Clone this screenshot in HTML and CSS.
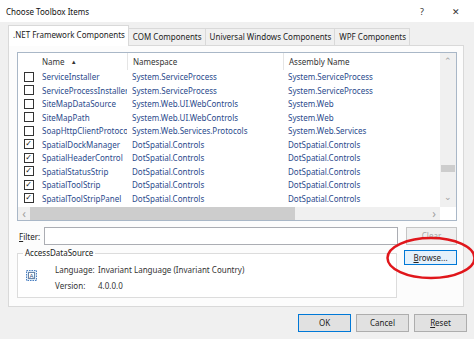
FILE: index.html
```html
<!DOCTYPE html>
<html>
    <head>
        <title>Choose Toolbox Items</title>
        <link rel="stylesheet" href="styles.css">
    </head>
    <body>
        <div class="window">
            <div class="titlebar">
                <span class="title">Choose Toolbox Items</span>
                <span class="tbtn">?</span>
                <span class="tbtn">&#x2715;</span>
            </div>
            <div class="client">
                <div class="tabs">
                    <div class="tab active">.NET Framework Components</div>
                    <div class="tab">COM Components</div>
                    <div class="tab">Universal Windows Components</div>
                    <div class="tab">WPF Components</div>
                </div>
                <div class="panel">
                    <div class="list">
                        <div class="listTop">
                            <div class="rows">
                                <div class="row header">
                                    <div class="c0"></div>
                                    <div class="c1">Name <span class="sort">&#9650;</span></div>
                                    <div class="c2 sep">Namespace</div>
                                    <div class="c3 sep">Assembly Name</div>
                                </div>
                                <div class="row"><div class="c0"><span class="cb"></span></div><div class="c1">ServiceInstaller</div><div class="c2">System.ServiceProcess</div><div class="c3">System.ServiceProcess</div></div>
                                <div class="row"><div class="c0"><span class="cb"></span></div><div class="c1">ServiceProcessInstaller</div><div class="c2">System.ServiceProcess</div><div class="c3">System.ServiceProcess</div></div>
                                <div class="row"><div class="c0"><span class="cb"></span></div><div class="c1">SiteMapDataSource</div><div class="c2">System.Web.UI.WebControls</div><div class="c3">System.Web</div></div>
                                <div class="row"><div class="c0"><span class="cb"></span></div><div class="c1">SiteMapPath</div><div class="c2">System.Web.UI.WebControls</div><div class="c3">System.Web</div></div>
                                <div class="row"><div class="c0"><span class="cb"></span></div><div class="c1">SoapHttpClientProtocol</div><div class="c2">System.Web.Services.Protocols</div><div class="c3">System.Web.Services</div></div>
                                <div class="row"><div class="c0"><span class="cb on">&#10003;</span></div><div class="c1">SpatialDockManager</div><div class="c2">DotSpatial.Controls</div><div class="c3">DotSpatial.Controls</div></div>
                                <div class="row"><div class="c0"><span class="cb on">&#10003;</span></div><div class="c1">SpatialHeaderControl</div><div class="c2">DotSpatial.Controls</div><div class="c3">DotSpatial.Controls</div></div>
                                <div class="row"><div class="c0"><span class="cb on">&#10003;</span></div><div class="c1">SpatialStatusStrip</div><div class="c2">DotSpatial.Controls</div><div class="c3">DotSpatial.Controls</div></div>
                                <div class="row"><div class="c0"><span class="cb on">&#10003;</span></div><div class="c1">SpatialToolStrip</div><div class="c2">DotSpatial.Controls</div><div class="c3">DotSpatial.Controls</div></div>
                                <div class="row"><div class="c0"><span class="cb on">&#10003;</span></div><div class="c1">SpatialToolStripPanel</div><div class="c2">DotSpatial.Controls</div><div class="c3">DotSpatial.Controls</div></div>
                            </div>
                            <div class="vscroll">
                                <span class="arrow">&#8963;</span>
                                <div class="vtrack"><div class="vthumb"></div></div>
                                <span class="arrow down">&#8964;</span>
                            </div>
                        </div>
                        <div class="hscroll">
                            <span class="harrow">&lsaquo;</span>
                            <div class="htrack"><div class="hthumb"></div></div>
                            <span class="harrow">&rsaquo;</span>
                        </div>
                    </div>
                    <div class="filterRow">
                        <label><u>F</u>ilter:</label>
                        <div class="textbox"></div>
                        <div class="btn disabled">Clear</div>
                    </div>
                    <div class="infoRow">
                        <fieldset class="group">
                            <legend>AccessDataSource</legend>
                            <div class="info">
                                <svg class="icon" width="11" height="11" viewBox="0 0 11 11">
                                    <rect x="0.5" y="0.5" width="10" height="10" fill="#dbe9f7" stroke="#4a7fc1" stroke-dasharray="1.5 1"/>
                                    <rect x="2.5" y="2.5" width="6" height="6" fill="#fff" stroke="#6b86a8"/>
                                    <text x="5.5" y="8" font-size="6" text-anchor="middle" fill="#2f4f7f" font-family="Liberation Sans, sans-serif">A</text>
                                </svg>
                                <div class="props">
                                    <span>Language:</span><span>Invariant Language (Invariant Country)</span>
                                    <span>Version:</span><span>4.0.0.0</span>
                                </div>
                            </div>
                        </fieldset>
                        <div class="browseWrap">
                            <div class="btn browse"><u>B</u>rowse...</div>
                            <svg class="circle" width="92" height="46" viewBox="0 0 92 46">
                                <ellipse cx="46" cy="23" rx="43.5" ry="20" fill="none" stroke="#e0161b" stroke-width="2.5"/>
                            </svg>
                        </div>
                    </div>
                </div>
                <div class="buttons">
                    <div class="btn default">OK</div>
                    <div class="btn">Cancel</div>
                    <div class="btn"><u>R</u>eset</div>
                </div>
            </div>
        </div>
    </body>
</html>
```
FILE: styles.css
```css
html,body{
    margin:0;
    padding:0;
}
body{
    font-family:"Noto Sans","Open Sans",sans-serif;
    font-size:8px;
    color:#222;
}
.window{
    width:474px;
    height:339px;
    display:flex;
    flex-direction:column;
    background:#f0f0f0;
    overflow:hidden;
}
.titlebar{
    height:22px;
    background:#fff;
    display:flex;
    align-items:center;
    padding-left:6px;
    padding-right:1px;
}
.title{
    flex:1;
    font-size:8px;
    color:#111;
}
.tbtn{
    width:34px;
    text-align:center;
    font-size:9px;
    color:#333;
}
.client{
    flex:1;
    padding:4px 10px 0 8px;
}
.tabs{
    display:flex;
    align-items:flex-end;
    height:19px;
}
.tab{
    height:16px;
    line-height:16px;
    padding:0 3px 0 4px;
    border:1px solid #d9d9d9;
    border-bottom:none;
    margin-left:-1px;
    color:#222;
}
.tab.active{
    height:20px;
    line-height:18px;
    margin-left:0;
    background:#fff;
    position:relative;
    z-index:1;
    margin-bottom:-1px;
}
.panel{
    height:262px;
    border:1px solid #d9d9d9;
    background:#fcfcfc;
    padding:6px 6px 0 8px;
    box-sizing:border-box;
}
.list{
    width:440px;
    height:169px;
    border:1px solid #a9b7c7;
    box-sizing:border-box;
    background:#fff;
    display:flex;
    flex-direction:column;
}
.listTop{
    display:flex;
    height:154px;
}
.rows{
    width:422px;
    overflow:hidden;
}
.row{
    display:flex;
    height:13.5px;
    line-height:13.5px;
    color:#2a4a8c;
    white-space:nowrap;
}
.row.header{
    height:17px;
    line-height:17px;
    color:#333;
}
.c0{
    width:19px;
    display:flex;
    align-items:center;
    justify-content:center;
    padding-left:2px;
    box-sizing:border-box;
}
.c1{
    width:90px;
    padding-left:5px;
    box-sizing:border-box;
    overflow:hidden;
}
.c2{
    width:156px;
    padding-left:5px;
    box-sizing:border-box;
    overflow:hidden;
}
.c3{
    width:157px;
    padding-left:5px;
    box-sizing:border-box;
    overflow:hidden;
}
.header .sep{
    border-left:1px solid #e5e5e5;
}
.sort{
    font-size:6px;
    color:#333;
    margin-left:4px;
    vertical-align:1px;
}
.cb{
    width:8px;
    height:8px;
    border:1px solid #333;
    background:#fff;
    font-size:8px;
    line-height:8px;
    text-align:center;
    color:#111;
    font-family:"DejaVu Sans",sans-serif;
}
.vscroll{
    width:16px;
    background:#f0f0f0;
    display:flex;
    flex-direction:column;
    align-items:center;
}
.arrow{
    height:15px;
    line-height:15px;
    font-size:9px;
    color:#a0a0a0;
}
.arrow.down{
    line-height:10px;
}
.vtrack{
    flex:1;
    width:100%;
    position:relative;
}
.vthumb{
    position:absolute;
    left:1px;
    right:1px;
    top:97px;
    height:7px;
    background:#cdcdcd;
}
.hscroll{
    flex:1;
    display:flex;
    align-items:center;
    background:#f0f0f0;
    margin-right:16px;
}
.harrow{
    width:12px;
    text-align:center;
    font-size:12px;
    line-height:13px;
    color:#a0a0a0;
}
.htrack{
    flex:1;
    height:100%;
}
.hthumb{
    width:265px;
    height:100%;
    background:#cdcdcd;
}
.filterRow{
    display:flex;
    align-items:center;
    margin-top:6px;
    height:18px;
}
.filterRow label{
    width:25px;
    padding-left:2px;
}
.textbox{
    width:354px;
    height:18px;
    border:1px solid #abadb3;
    box-sizing:border-box;
    background:#fff;
}
.btn{
    border:1px solid #adadad;
    background:#e1e1e1;
    box-sizing:border-box;
    text-align:center;
    color:#222;
}
.filterRow .btn{
    width:51px;
    height:18px;
    line-height:16px;
    margin-left:8px;
}
.btn.disabled{
    background:#f0f0f0;
    border-color:#c5c5c5;
    color:#a8a8a8;
}
.infoRow{
    display:flex;
    margin-top:2px;
}
.group{
    width:380px;
    height:51px;
    margin:0;
    padding:0 6px 0 5px;
    border:1px solid #dcdcdc;
    background:#fff;
    box-sizing:border-box;
}
.group legend{
    padding:0 2px;
    margin-left:0;
    color:#222;
    line-height:12px;
}
.info{
    display:flex;
    align-items:flex-start;
    padding-top:5px;
}
.icon{
    margin:6px 0 0 3px;
}
.props{
    display:grid;
    grid-template-columns:43px auto;
    row-gap:5px;
    margin-left:18px;
    color:#333;
}
.browseWrap{
    position:relative;
    margin-left:7px;
}
.browse{
    width:53px;
    height:15px;
    line-height:13px;
    margin-top:3px;
    background:#e5f1fb;
    border-color:#0078d7;
}
.circle{
    position:absolute;
    left:-19px;
    top:-12px;
}
.buttons{
    display:flex;
    justify-content:flex-end;
    gap:5px;
    margin-top:7px;
    margin-right:-3px;
}
.buttons .btn{
    width:53px;
    height:18px;
    line-height:16px;
}
.btn.default{
    border-color:#0078d7;
}
```
